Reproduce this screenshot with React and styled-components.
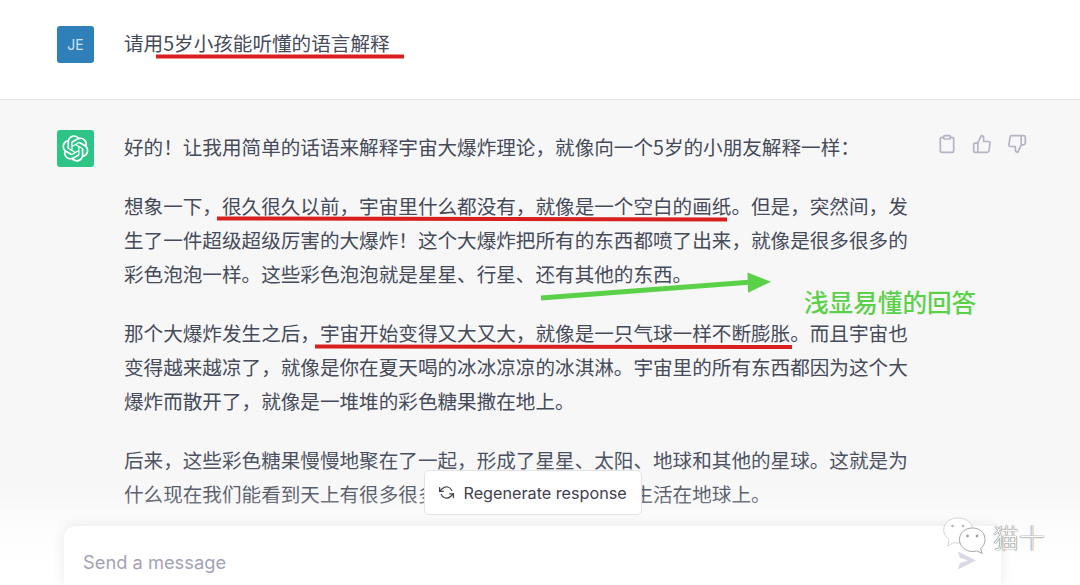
import React from "react";
import styled, { createGlobalStyle } from "styled-components";

const GlobalStyle = createGlobalStyle`
  html, body {
    margin: 0;
    padding: 0;
    background: #fff;
  }
`;

const Page = styled.div`
  position: relative;
  width: 1080px;
  height: 585px;
  overflow: hidden;
  font-family: "Inter", "Noto Sans CJK SC", sans-serif;
  color: #374151;
`;

const Row = styled.div`
  display: flex;
  align-items: flex-start;
  gap: 30px;
  box-sizing: border-box;
  padding: ${(p) => p.$padding};
  background: ${(p) => p.$bg};
  height: ${(p) => p.$height};
  border-bottom: ${(p) => (p.$divider ? "1px solid #e5e5e7" : "none")};
`;

const Avatar = styled.div`
  flex: 0 0 37px;
  width: 37px;
  height: 37px;
  border-radius: 3px;
  display: flex;
  align-items: center;
  justify-content: center;
  background: ${(p) => p.$bg};
  color: #cfe2f0;
  font-size: 14px;

  svg {
    width: 27px;
    height: 27px;
  }
`;

const Body = styled.div`
  width: 786px;
  font-family: "Noto Sans CJK SC", "Inter", sans-serif;
  font-size: 19.6px;
  line-height: 34px;
  font-weight: 400;
  color: #454b59;
`;

const Paragraph = styled.p`
  margin: 0 0 25px;
`;

const Actions = styled.div`
  display: flex;
  gap: 15px;
  margin-left: -3px;
  margin-top: 4px;
  color: #b4b4c8;
`;

const ActionIcon = styled.svg`
  width: 20px;
  height: 20px;
  fill: none;
  stroke: currentColor;
  stroke-width: 2;
  stroke-linecap: round;
  stroke-linejoin: round;
`;

const BottomBar = styled.div`
  position: absolute;
  left: 0;
  right: 0;
  bottom: 0;
  height: 145px;
  box-sizing: border-box;
  padding-right: 15px;
  display: flex;
  flex-direction: column;
  align-items: center;
  justify-content: flex-end;
  background: linear-gradient(
    180deg,
    rgba(255, 255, 255, 0) 0%,
    rgba(255, 255, 255, 0.12) 38%,
    rgba(255, 255, 255, 0.7) 62%,
    #ffffff 85%
  );
`;

const RegenButton = styled.button`
  display: flex;
  align-items: center;
  gap: 10px;
  box-sizing: border-box;
  width: 218px;
  height: 45px;
  margin: 0 0 11px;
  padding: 0 14px;
  background: #fff;
  border: 1px solid #e3e3e6;
  border-radius: 5px;
  font-family: inherit;
  font-size: 16.2px;
  color: #40414f;
  white-space: nowrap;

  svg {
    flex: none;
    width: 15px;
    height: 15px;
    fill: none;
    stroke: currentColor;
    stroke-width: 2;
    stroke-linecap: round;
    stroke-linejoin: round;
  }
`;

const InputBox = styled.div`
  display: flex;
  align-items: flex-start;
  justify-content: space-between;
  box-sizing: border-box;
  width: 937px;
  height: 59px;
  padding: 23px 25px 0 19px;
  background: #fff;
  border-radius: 12px 12px 0 0;
  box-shadow: 0 0 14px rgba(0, 0, 0, 0.09);
  font-size: 18.3px;
  line-height: 26px;
  color: #a3a3b5;
`;

const SendIcon = styled.svg`
  width: 18px;
  height: 19px;
  margin-top: 2px;
  fill: #d9d9e3;
`;

const Annotations = styled.svg`
  position: absolute;
  inset: 0;
  width: 1080px;
  height: 585px;
  pointer-events: none;
`;

const Callout = styled.div`
  position: absolute;
  left: 804px;
  top: 285px;
  font-family: "Noto Sans CJK SC", sans-serif;
  font-size: 24.6px;
  font-weight: 500;
  line-height: 32px;
  color: #5bd14a;
  white-space: nowrap;
`;

const Watermark = styled.div`
  position: absolute;
  left: 943px;
  top: 517px;
  display: flex;
  align-items: center;
  gap: 6px;
  font-family: "Noto Sans CJK SC", sans-serif;
  font-size: 26px;
  font-weight: 300;
  line-height: 40px;
  color: #fff;
  text-shadow: 0 0 1px #555, 0 0 1px #555;

  svg {
    width: 44px;
    height: 40px;
  }
`;

function OpenAILogo() {
  return (
    <svg viewBox="0 0 41 41" fill="#fff">
      <path d="M37.5324 16.8707C37.9808 15.5241 38.1363 14.0974 37.9886 12.6859C37.8409 11.2744 37.3934 9.91076 36.676 8.68622C35.6126 6.83404 33.9882 5.3676 32.0373 4.4985C30.0864 3.62941 27.9098 3.40259 25.8215 3.85078C24.8796 2.7893 23.7219 1.94125 22.4257 1.36341C21.1295 0.785575 19.7249 0.491269 18.3058 0.500197C16.1708 0.495044 14.0893 1.16803 12.3614 2.42214C10.6335 3.67624 9.34853 5.44666 8.6917 7.47815C7.30085 7.76286 5.98686 8.3414 4.8377 9.17505C3.68854 10.0087 2.73073 11.0782 2.02839 12.312C0.956464 14.1591 0.498905 16.2988 0.721698 18.4228C0.944492 20.5467 1.83612 22.5449 3.268 24.1293C2.81966 25.4759 2.66413 26.9026 2.81182 28.3141C2.95951 29.7256 3.40701 31.0892 4.12437 32.3138C5.18791 34.1659 6.8123 35.6322 8.76321 36.5013C10.7141 37.3704 12.8907 37.5973 14.9789 37.1492C15.9208 38.2107 17.0786 39.0587 18.3747 39.6366C19.6709 40.2144 21.0755 40.5087 22.4946 40.4998C24.6307 40.5054 26.7133 39.8321 28.4418 38.5772C30.1704 37.3223 31.4556 35.5506 32.1119 33.5179C33.5027 33.2332 34.8167 32.6547 35.9659 31.821C37.115 30.9874 38.0728 29.9178 38.7752 28.684C39.8458 26.8371 40.3023 24.6979 40.0789 22.5748C39.8556 20.4517 38.9639 18.4544 37.5324 16.8707ZM22.4978 37.8849C20.7443 37.8874 19.0459 37.2733 17.6994 36.1501C17.7601 36.117 17.8666 36.0586 17.936 36.0161L25.9004 31.4156C26.1003 31.3019 26.2663 31.137 26.3813 30.9378C26.4964 30.7386 26.5563 30.5124 26.5549 30.2825V19.0542L29.9213 20.998C29.9389 21.0068 29.9541 21.0198 29.9656 21.0359C29.977 21.052 29.9842 21.0707 29.9867 21.0902V30.3889C29.9842 32.375 29.1946 34.2791 27.7909 35.6841C26.3872 37.0892 24.4838 37.8806 22.4978 37.8849ZM6.39227 31.0064C5.51397 29.4888 5.19742 27.7107 5.49804 25.9832C5.55718 26.0187 5.66048 26.0818 5.73461 26.1244L13.699 30.7248C13.8975 30.8408 14.1233 30.902 14.3532 30.902C14.583 30.902 14.8088 30.8408 15.0073 30.7248L24.731 25.1103V28.9979C24.7321 29.0177 24.7283 29.0376 24.7199 29.0556C24.7115 29.0736 24.6988 29.0893 24.6829 29.1012L16.6317 33.7497C14.9096 34.7416 12.8643 35.0097 10.9447 34.4954C9.02506 33.9811 7.38785 32.7263 6.39227 31.0064ZM4.29707 13.6194C5.17156 12.0998 6.55279 10.9364 8.19885 10.3327C8.19885 10.4013 8.19491 10.5228 8.19491 10.6071V19.808C8.19351 20.0378 8.25334 20.2638 8.36823 20.4629C8.48312 20.6619 8.64893 20.8267 8.84863 20.9404L18.5723 26.5542L15.206 28.4979C15.1894 28.5089 15.1703 28.5155 15.1505 28.5173C15.1307 28.5191 15.1107 28.516 15.0924 28.5082L7.04046 23.8557C5.32135 22.8601 4.06716 21.2235 3.55289 19.3046C3.03862 17.3858 3.30624 15.3413 4.29707 13.6194ZM31.955 20.0556L22.2312 14.4411L25.5976 12.4981C25.6142 12.4872 25.6333 12.4805 25.6531 12.4787C25.6729 12.4769 25.6928 12.4801 25.7111 12.4879L33.7631 17.1364C34.9967 17.849 36.0017 18.8982 36.6606 20.1613C37.3194 21.4244 37.6047 22.849 37.4832 24.2684C37.3617 25.6878 36.8382 27.0432 35.9743 28.1759C35.1103 29.3086 33.9415 30.1717 32.6047 30.6641C32.6047 30.5947 32.6047 30.4733 32.6047 30.3889V21.188C32.6066 20.9586 32.5474 20.7328 32.4332 20.5338C32.319 20.3348 32.154 20.1698 31.955 20.0556ZM35.3055 15.0128C35.2464 14.9765 35.1431 14.9142 35.069 14.8717L27.1045 10.2712C26.906 10.1554 26.6803 10.0943 26.4504 10.0943C26.2206 10.0943 25.9948 10.1554 25.7963 10.2712L16.0726 15.8858V11.9982C16.0715 11.9783 16.0753 11.9585 16.0837 11.9405C16.0921 11.9225 16.1048 11.9068 16.1207 11.8949L24.1719 7.25025C25.4053 6.53903 26.8158 6.19376 28.2383 6.25482C29.6608 6.31589 31.0364 6.78077 32.2044 7.59508C33.3723 8.40939 34.2842 9.53945 34.8334 10.8531C35.3826 12.1667 35.5464 13.6095 35.3055 15.0128ZM14.2424 21.9419L10.8752 19.9981C10.8576 19.9893 10.8423 19.9763 10.8309 19.9602C10.8195 19.9441 10.8122 19.9254 10.8098 19.9058V10.6071C10.8107 9.18295 11.2173 7.78848 11.9819 6.58696C12.7466 5.38544 13.8377 4.42659 15.1275 3.82264C16.4173 3.21869 17.8524 2.99464 19.2649 3.1767C20.6775 3.35876 22.0089 3.93941 23.1034 4.85067C23.0427 4.88379 22.937 4.94215 22.8668 4.98473L14.9024 9.58517C14.7025 9.69878 14.5366 9.86356 14.4215 10.0626C14.3065 10.2616 14.2466 10.4877 14.2479 10.7175L14.2424 21.9419ZM16.071 17.9991L20.4018 15.4978L24.7325 17.9975V22.9985L20.4018 25.4983L16.071 22.9985V17.9991Z" />
    </svg>
  );
}

function WeChatLogo() {
  return (
    <svg viewBox="0 0 44 40">
      <path
        d="M15 1C7 1 .7 6.200 .7 13c0 3.900 2.100 7.200 5.300 9.400L4.600 29l6.200-3.400c1.400.4 2.800.5 4.200.5 8 0 15-5.800 15-12.600C30 6.200 23 1 15 1z"
        fill="#fff"
        stroke="#c4c4c4"
        strokeWidth="0.7"
      />
      <path
        d="M29.500 11c-7 0-13 4.500-13 11.500s6 12 13 12c1.500 0 2.900-.2 4.200-.7l5.600 2.700-1.700-5c2.800-2 4.400-5.300 4.400-9 0-7-5.500-11.500-12.500-11.500z"
        fill="#fff"
        stroke="#8f8f8f"
        strokeWidth="0.8"
      />
      <circle cx="9.500" cy="9" r="1.300" fill="#b5b5b5" />
      <circle cx="20" cy="9" r="1.300" fill="#b5b5b5" />
      <circle cx="24.500" cy="19" r="1.400" fill="#a0a0a0" />
      <circle cx="34" cy="19" r="1.400" fill="#a0a0a0" />
    </svg>
  );
}

export default function App() {
  return (
    <Page>
      <GlobalStyle />

      <Row $padding="26px 0 0 57px" $height="100px" $bg="#fff" $divider>
        <Avatar $bg="#2f7fb8">JE</Avatar>
        <Body>请用5岁小孩能听懂的语言解释</Body>
      </Row>

      <Row $padding="30px 0 0 57px" $height="485px" $bg="#f7f7f8">
        <Avatar $bg="#2dc585">
          <OpenAILogo />
        </Avatar>
        <Body>
          <Paragraph>
            好的！让我用简单的话语来解释宇宙大爆炸理论，就像向一个5岁的小朋友解释一样：
          </Paragraph>
          <Paragraph>
            想象一下，很久很久以前，宇宙里什么都没有，就像是一个空白的画纸。但是，突然间，发生了一件超级超级厉害的大爆炸！这个大爆炸把所有的东西都喷了出来，就像是很多很多的彩色泡泡一样。这些彩色泡泡就是星星、行星、还有其他的东西。
          </Paragraph>
          <Paragraph>
            那个大爆炸发生之后，宇宙开始变得又大又大，就像是一只气球一样不断膨胀。而且宇宙也变得越来越凉了，就像是你在夏天喝的冰冰凉凉的冰淇淋。宇宙里的所有东西都因为这个大爆炸而散开了，就像是一堆堆的彩色糖果撒在地上。
          </Paragraph>
          <Paragraph>
            后来，这些彩色糖果慢慢地聚在了一起，形成了星星、太阳、地球和其他的星球。这就是为什么现在我们能看到天上有很多很多的星星，而我们人类就生活在地球上。
          </Paragraph>
        </Body>
        <Actions>
          <ActionIcon viewBox="0 0 24 24">
            <path d="M16 4h2a2 2 0 0 1 2 2v14a2 2 0 0 1-2 2H6a2 2 0 0 1-2-2V6a2 2 0 0 1 2-2h2" />
            <rect x="8" y="2" width="8" height="4" rx="1" />
          </ActionIcon>
          <ActionIcon viewBox="0 0 24 24">
            <path d="M14 9V5a3 3 0 0 0-3-3l-4 9v11h11.280a2 2 0 0 0 2-1.700l1.380-9a2 2 0 0 0-2-2.300zM7 22H4a2 2 0 0 1-2-2v-7a2 2 0 0 1 2-2h3" />
          </ActionIcon>
          <ActionIcon viewBox="0 0 24 24">
            <path d="M10 15v4a3 3 0 0 0 3 3l4-9V2H5.720a2 2 0 0 0-2 1.700l-1.380 9a2 2 0 0 0 2 2.300zm7-13h2.670A2.310 2.310 0 0 1 22 4v7a2.310 2.310 0 0 1-2.330 2H17" />
          </ActionIcon>
        </Actions>
      </Row>

      <BottomBar>
        <RegenButton>
          <svg viewBox="0 0 24 24">
            <polyline points="1 4 1 10 7 10" />
            <polyline points="23 20 23 14 17 14" />
            <path d="M20.490 9A9 9 0 0 0 5.640 5.640L1 10m22 4l-4.640 4.360A9 9 0 0 1 3.510 15" />
          </svg>
          Regenerate response
        </RegenButton>
        <InputBox>
          Send a message
          <SendIcon viewBox="0 0 20 20">
            <path d="M0 0l20 10L0 20l2-7 9-3-9-3z" />
          </SendIcon>
        </InputBox>
      </BottomBar>

      <Annotations viewBox="0 0 1080 585">
        <line x1="156" y1="56.500" x2="404" y2="56.500" stroke="#d9201f" strokeWidth="4" />
        <line x1="217" y1="218.500" x2="727" y2="219.500" stroke="#d9201f" strokeWidth="4" />
        <line x1="315" y1="346.500" x2="792" y2="347" stroke="#d9201f" strokeWidth="4" />
        <line x1="541" y1="298" x2="752" y2="282" stroke="#5bd14a" strokeWidth="5" />
        <polygon points="747.500,272.500 771,281.700 748,292.700" fill="#5bd14a" />
      </Annotations>

      <Callout>浅显易懂的回答</Callout>

      <Watermark>
        <WeChatLogo />
        猫十
      </Watermark>
    </Page>
  );
}
